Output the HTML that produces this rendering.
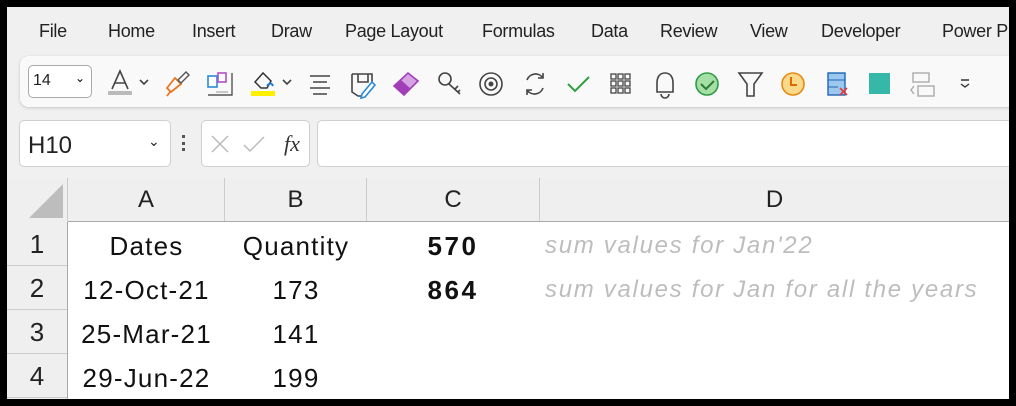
<!DOCTYPE html>
<html><head><meta charset="utf-8"><style>
*{margin:0;padding:0;box-sizing:border-box}
body{width:1016px;height:406px;background:#000;position:relative;overflow:hidden;font-family:"Liberation Sans",sans-serif}
#app{position:absolute;left:7px;top:7px;width:1002px;height:392px;background:#f0f0f0;overflow:hidden}
.a{position:absolute}
.menu span{position:absolute;top:14px;font-size:18px;color:#222;letter-spacing:-0.3px}
.tb{left:13px;top:49px;width:1000px;height:51px;background:#f9f9f9;border-radius:9px;box-shadow:0 1px 3px rgba(0,0,0,.18)}
.box{background:#fff;border:1px solid #cfcfcf;border-radius:5px}
.grid{left:0;top:171px;width:1002px;height:221px;background:#fff}
.hd{position:absolute;background:#efefef;color:#222;font-size:24px;text-align:center}
.c{position:absolute;font-size:26px;color:#111;text-align:center;height:44px;line-height:44px;letter-spacing:1.2px}
.cm{text-align:left;font-style:italic;color:#bdbdbd;letter-spacing:1.7px;font-size:24px}
</style></head><body><div id="app">
<div class="menu">
<span style="left:32px">File</span><span style="left:101px">Home</span><span style="left:185px">Insert</span><span style="left:264px">Draw</span><span style="left:338px">Page Layout</span><span style="left:475px">Formulas</span><span style="left:584px">Data</span><span style="left:653px">Review</span><span style="left:743px">View</span><span style="left:814px">Developer</span><span style="left:935px">Power P</span>
</div>
<div class="a tb"></div>
<div class="a box" style="left:21px;top:58px;width:64px;height:33px;border-color:#aaa"><span class="a" style="left:4px;top:6px;font-size:16px;color:#222">14</span><span class="a" style="left:46px;top:5px;font-size:12px">⌄</span></div>
<svg class="a" style="left:-7px;top:-7px" width="1016" height="120" viewBox="0 0 1016 120">
<g fill="none" stroke="#444" stroke-width="1.6">
<path d="M112 89 L120 71 L128 89 M115 83 H125"/>
<path d="M140 80 l4 4 l4 -4"/>
<path d="M283 80 l4 4 l4 -4"/>
<path d="M310 76 H330 M313 82 H327 M310 88 H330 M313 94 H327"/>
<path d="M352 74 H372 V82 M352 74 V92 L358 96 H362 M358 74 V82 H368 V74"/>
<circle cx="445" cy="79" r="6"/><path d="M449 84 L460 94 M455 89 l3 -3 M458 92 l2 -2"/>
<circle cx="491" cy="84" r="11"/><circle cx="491" cy="84" r="6"/>
<path d="M527 80 a9 9 0 0 1 16 -2 M543 88 a9 9 0 0 1 -16 2 M543 73 v5 h-5 M527 95 v-5 h5"/>
<path d="M669 94 a4 4 0 0 1 -8 0 M665 73 c-6 0 -8 5 -8 10 v9 h16 v-9 c0 -5 -2 -10 -8 -10"/>
<path d="M739 73 H762 L754 84 V96 H747 V84 Z"/>
</g>
<circle cx="491" cy="84" r="2.5" fill="#444"/>
<rect x="108" y="91" width="24" height="4" fill="#bbb"/>
<path d="M167 88 l8 -10 l6 6 l-10 8 z M170 92 l-3 4" fill="none" stroke="#e87722" stroke-width="1.8"/>
<path d="M178 80 l8 -8 l3 3 l-8 8 z" fill="none" stroke="#555" stroke-width="1.4"/>
<rect x="208" y="76" width="9" height="11" fill="#fff" stroke="#2a8ad9" stroke-width="1.6"/><rect x="218" y="73" width="8" height="9" fill="#fff" stroke="#b14fc5" stroke-width="1.6"/>
<path d="M208 95 H232 V73" stroke="#555" fill="none" stroke-width="1.4"/><path d="M216 92 H228" stroke="#999"/>
<path d="M255 82 l8 -9 l8 8 l-4 7 h-6z" fill="none" stroke="#333" stroke-width="1.5"/><path d="M267 86 q4 -5 6 0" stroke="#1f77d0" stroke-width="2" fill="none"/>
<rect x="251" y="91" width="24" height="5" fill="#ffef00"/>
<path d="M362 94 l10 -12 l3 3 l-10 12 l-4 1z" fill="#fff" stroke="#2a8ad9" stroke-width="1.6"/>
<path d="M394 86 L408 73 L418 81 L404 95 Z" fill="#d7a4e3" stroke="#a23fb8" stroke-width="1.6"/><path d="M394 86 L401 80 L411 89 L404 95 Z" fill="#a23fb8"/>
<path d="M568 84 l7 7 l14 -14" stroke="#2ea043" stroke-width="2" fill="none"/>
<g fill="none" stroke="#444" stroke-width="1.3"><rect x="611" y="74" width="5" height="5"/><rect x="618" y="74" width="5" height="5"/><rect x="625" y="74" width="5" height="5"/><rect x="611" y="81" width="5" height="5"/><rect x="618" y="81" width="5" height="5"/><rect x="625" y="81" width="5" height="5"/><rect x="611" y="88" width="5" height="5"/><rect x="618" y="88" width="5" height="5"/><rect x="625" y="88" width="5" height="5"/></g>
<circle cx="707" cy="84" r="11" fill="#a6dfa6" stroke="#2e9b47" stroke-width="1.6"/><path d="M701 84 l5 5 l8 -8" stroke="#2e7d32" stroke-width="2" fill="none"/>
<circle cx="793" cy="84" r="11" fill="#fbd98a" stroke="#e88a10" stroke-width="1.6"/><path d="M791 77 v8 h6" stroke="#e06a00" stroke-width="2" fill="none"/>
<rect x="828" y="73" width="17" height="22" fill="#9cc7ee" stroke="#1f66b5" stroke-width="1.4"/><path d="M828 80 H845 M828 87 H838" stroke="#1f66b5"/><path d="M840 88 l7 7 M847 88 l-7 7" stroke="#e53935" stroke-width="1.6"/>
<rect x="869" y="73" width="21" height="21" fill="#35b8a8"/>
<g stroke="#aaa" fill="none" stroke-width="1.4"><rect x="913" y="73" width="16" height="9"/><rect x="918" y="86" width="16" height="10"/><path d="M914 86 l-3 4 l3 4"/></g>
<path d="M961 80 h8 M961 84 l4 3 l4 -3" stroke="#333" stroke-width="1.4" fill="none"/>
</svg>
<div class="a box" style="left:12px;top:113px;width:152px;height:47px"><span class="a" style="left:8px;top:11px;font-size:24px;color:#222">H10</span><span class="a" style="left:128px;top:12px;font-size:14px;color:#222">⌄</span></div>
<div class="a" style="left:175px;top:128px;width:3px;height:16px;border-left:3px dotted #555"></div>
<div class="a box" style="left:194px;top:113px;width:109px;height:47px"><svg width="109" height="47"><path d="M10 15 l16 16 M26 15 l-16 16" stroke="#bbb" stroke-width="1.5"/><path d="M42 24 l6 6 l14 -14" stroke="#bbb" stroke-width="1.5" fill="none"/></svg><span class="a" style="left:82px;top:10px;font-family:'Liberation Serif',serif;font-style:italic;font-size:22px;color:#333">fx</span></div>
<div class="a box" style="left:310px;top:113px;width:700px;height:47px"></div>
<div class="a grid">
<div class="hd" style="left:0;top:0;width:61px;height:44px;border-right:1px solid #ccc"><svg width="61" height="44"><path d="M22 40 L56 40 L56 6 Z" fill="#bdbdbd"/></svg></div>
<div class="hd" style="left:61px;top:0;width:941px;height:44px;border-bottom:1px solid #a9a9a9"></div>
<div class="hd" style="left:61px;top:0;width:157px;height:43px;line-height:43px;border-right:1px solid #ccc">A</div>
<div class="hd" style="left:218px;top:0;width:142px;height:43px;line-height:43px;border-right:1px solid #ccc">B</div>
<div class="hd" style="left:360px;top:0;width:173px;height:43px;line-height:43px;border-right:1px solid #ccc">C</div>
<div class="hd" style="left:533px;top:0;width:469px;height:43px;line-height:43px">D</div>
<div class="hd" style="left:0;top:44px;width:61px;height:177px;border-right:1px solid #a9a9a9"></div>
<div class="hd" style="left:0;top:44px;width:60px;height:44px;line-height:44px;border-bottom:1px solid #ccc;font-size:26px">1</div>
<div class="hd" style="left:0;top:88px;width:60px;height:44px;line-height:44px;border-bottom:1px solid #ccc;font-size:26px">2</div>
<div class="hd" style="left:0;top:132px;width:60px;height:44px;line-height:44px;border-bottom:1px solid #ccc;font-size:26px">3</div>
<div class="hd" style="left:0;top:176px;width:60px;height:44px;line-height:44px;border-bottom:1px solid #ccc;font-size:26px">4</div>
<div class="c" style="left:61px;top:46px;width:157px">Dates</div>
<div class="c" style="left:218px;top:46px;width:142px">Quantity</div>
<div class="c" style="left:380px;top:46px;width:132px;font-weight:bold;letter-spacing:2.5px">570</div>
<div class="c cm" style="left:538px;top:46px;width:460px">sum values for Jan'22</div>
<div class="c" style="left:61px;top:90px;width:157px">12-Oct-21</div>
<div class="c" style="left:218px;top:90px;width:142px">173</div>
<div class="c" style="left:380px;top:90px;width:132px;font-weight:bold;letter-spacing:2.5px">864</div>
<div class="c cm" style="left:538px;top:90px;width:464px;white-space:nowrap">sum values for Jan for all the years</div>
<div class="c" style="left:61px;top:134px;width:157px">25-Mar-21</div>
<div class="c" style="left:218px;top:134px;width:142px">141</div>
<div class="c" style="left:61px;top:178px;width:157px">29-Jun-22</div>
<div class="c" style="left:218px;top:178px;width:142px">199</div>
</div>
</div></body></html>
